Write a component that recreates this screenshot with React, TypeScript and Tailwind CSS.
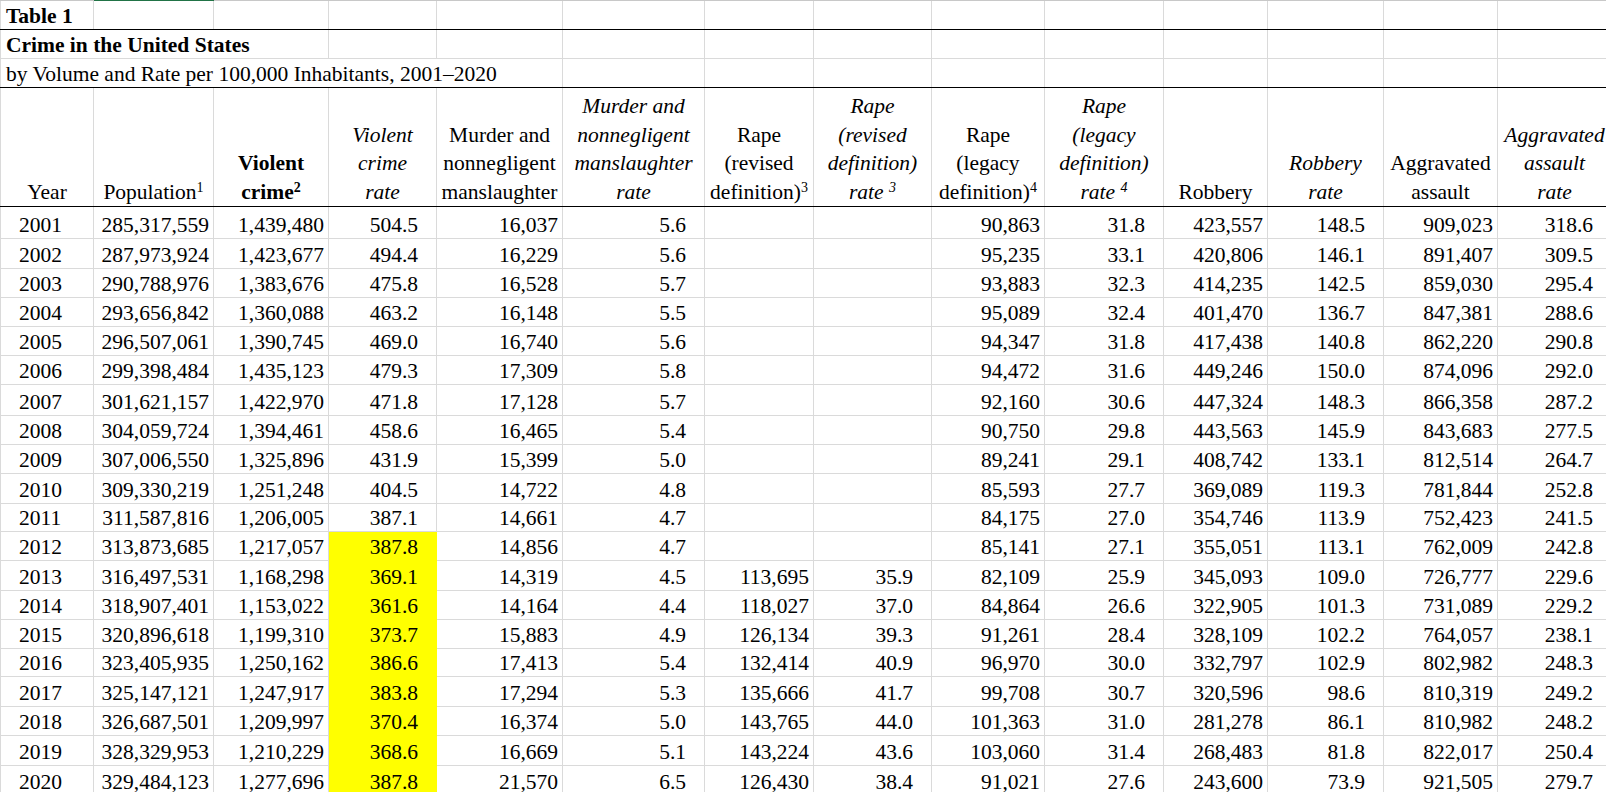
import React from "react";

const W = [
  "w-[94px] border-l",
  "w-[120px]",
  "w-[115px]",
  "w-[108px]",
  "w-[126px]",
  "w-[142px]",
  "w-[109px]",
  "w-[118px]",
  "w-[113px]",
  "w-[119px]",
  "w-[104px]",
  "w-[116px]",
  "w-[114px]",
  "w-[114px]",
];

const H = [
  "h-[32px]", "h-[30px]", "h-[29px]", "h-[29px]", "h-[29px]", "h-[29px]", "h-[31px]",
  "h-[29px]", "h-[29px]", "h-[30px]", "h-[28px]", "h-[29px]", "h-[30px]", "h-[29px]",
  "h-[29px]", "h-[28px]", "h-[30px]", "h-[29px]", "h-[30px]", "h-[30px]",
];

const Sup = ({ children }: { children: React.ReactNode }) => (
  <span className="relative -top-[7px] text-[14px] leading-none">{children}</span>
);

type Head = { lines: React.ReactNode[]; kind: "n" | "b" | "i" };

const HEAD: Head[] = [
  { lines: ["Year"], kind: "n" },
  { lines: [<>Population<Sup>1</Sup></>], kind: "n" },
  { lines: ["Violent", <>crime<Sup>2</Sup></>], kind: "b" },
  { lines: ["Violent", "crime", "rate"], kind: "i" },
  { lines: ["Murder and", "nonnegligent", "manslaughter"], kind: "n" },
  { lines: ["Murder and", "nonnegligent", "manslaughter", "rate"], kind: "i" },
  { lines: ["Rape", "(revised", <>definition)<Sup>3</Sup></>], kind: "n" },
  { lines: ["Rape", "(revised", "definition)", <>rate <Sup>3</Sup></>], kind: "i" },
  { lines: ["Rape", "(legacy", <>definition)<Sup>4</Sup></>], kind: "n" },
  { lines: ["Rape", "(legacy", "definition)", <>rate <Sup>4</Sup></>], kind: "i" },
  { lines: ["Robbery"], kind: "n" },
  { lines: ["Robbery", "rate"], kind: "i" },
  { lines: ["Aggravated", "assault"], kind: "n" },
  { lines: ["Aggravated", "assault", "rate"], kind: "i" },
];

const ROWS: string[][] = [
  ["2001","285,317,559","1,439,480","504.5","16,037","5.6","","","90,863","31.8","423,557","148.5","909,023","318.6"],
  ["2002","287,973,924","1,423,677","494.4","16,229","5.6","","","95,235","33.1","420,806","146.1","891,407","309.5"],
  ["2003","290,788,976","1,383,676","475.8","16,528","5.7","","","93,883","32.3","414,235","142.5","859,030","295.4"],
  ["2004","293,656,842","1,360,088","463.2","16,148","5.5","","","95,089","32.4","401,470","136.7","847,381","288.6"],
  ["2005","296,507,061","1,390,745","469.0","16,740","5.6","","","94,347","31.8","417,438","140.8","862,220","290.8"],
  ["2006","299,398,484","1,435,123","479.3","17,309","5.8","","","94,472","31.6","449,246","150.0","874,096","292.0"],
  ["2007","301,621,157","1,422,970","471.8","17,128","5.7","","","92,160","30.6","447,324","148.3","866,358","287.2"],
  ["2008","304,059,724","1,394,461","458.6","16,465","5.4","","","90,750","29.8","443,563","145.9","843,683","277.5"],
  ["2009","307,006,550","1,325,896","431.9","15,399","5.0","","","89,241","29.1","408,742","133.1","812,514","264.7"],
  ["2010","309,330,219","1,251,248","404.5","14,722","4.8","","","85,593","27.7","369,089","119.3","781,844","252.8"],
  ["2011","311,587,816","1,206,005","387.1","14,661","4.7","","","84,175","27.0","354,746","113.9","752,423","241.5"],
  ["2012","313,873,685","1,217,057","387.8","14,856","4.7","","","85,141","27.1","355,051","113.1","762,009","242.8"],
  ["2013","316,497,531","1,168,298","369.1","14,319","4.5","113,695","35.9","82,109","25.9","345,093","109.0","726,777","229.6"],
  ["2014","318,907,401","1,153,022","361.6","14,164","4.4","118,027","37.0","84,864","26.6","322,905","101.3","731,089","229.2"],
  ["2015","320,896,618","1,199,310","373.7","15,883","4.9","126,134","39.3","91,261","28.4","328,109","102.2","764,057","238.1"],
  ["2016","323,405,935","1,250,162","386.6","17,413","5.4","132,414","40.9","96,970","30.0","332,797","102.9","802,982","248.3"],
  ["2017","325,147,121","1,247,917","383.8","17,294","5.3","135,666","41.7","99,708","30.7","320,596","98.6","810,319","249.2"],
  ["2018","326,687,501","1,209,997","370.4","16,374","5.0","143,765","44.0","101,363","31.0","281,278","86.1","810,982","248.2"],
  ["2019","328,329,953","1,210,229","368.6","16,669","5.1","143,224","43.6","103,060","31.4","268,483","81.8","822,017","250.4"],
  ["2020","329,484,123","1,277,696","387.8","21,570","6.5","126,430","38.4","91,021","27.6","243,600","73.9","921,505","279.7"],
];

function TopRow({ text, bold, span, bottom }: { text: string; bold?: boolean; span: number; bottom: string }) {
  const spanW = ["", "w-[94px]", "w-[214px]", "w-[329px]", "w-[437px]", "w-[563px]"][span];
  return (
    <div className={`flex h-[29px] ${bottom}`}>
      <div
        className={`${spanW} shrink-0 border-l border-r border-[#dadada] flex items-end pl-[5px] pb-[2px] leading-[22px] whitespace-nowrap ${bold ? "font-bold" : ""}`}
      >
        {text}
      </div>
      {W.slice(span).map((w, i) => (
        <div key={i} className={`${w} shrink-0 border-r border-[#dadada]`} />
      ))}
    </div>
  );
}

export default function App() {
  return (
    <div className="w-[1606px] h-[792px] overflow-hidden bg-white text-black font-['Liberation_Serif','Times_New_Roman',serif] text-[21.5px]">
      <div className="w-[1612px]">
        {/* top strip */}
        <div className="flex h-[1px]">
          <div className="w-[94px] shrink-0 bg-[#c8c8c8]" />
          <div className="w-[120px] shrink-0 bg-[#217346]" />
          <div className="flex-1 bg-[#c8c8c8]" />
        </div>
        <TopRow text="Table 1" bold span={1} bottom="border-b border-black" />
        <TopRow text="Crime in the United States" bold span={3} bottom="border-b border-[#dadada]" />
        <TopRow text="by Volume and Rate per 100,000 Inhabitants, 2001–2020" span={5} bottom="border-b border-black" />

        {/* header */}
        <div className="flex h-[119px] border-b border-black">
          {HEAD.map((h, i) => (
            <div
              key={i}
              className={`${W[i]} shrink-0 border-r border-[#dadada] flex flex-col justify-end items-center text-center leading-[28.5px] ${
                h.kind === "b" ? "font-bold" : h.kind === "i" ? "italic" : ""
              }`}
            >
              {h.lines.map((l, j) => (
                <div key={j} className="whitespace-nowrap">
                  {l}
                </div>
              ))}
            </div>
          ))}
        </div>

        {/* body */}
        {ROWS.map((r, ri) => {
          const yellowRow = ri >= 11;
          return (
            <div key={ri} className={`flex ${H[ri]}`}>
              {r.map((v, ci) => {
                const yellow = yellowRow && ci === 3;
                const align =
                  ci === 0
                    ? "justify-start pl-[18px]"
                    : ci % 2 === 1 && ci !== 1
                    ? "justify-end pr-[18px]"
                    : ci === 1
                    ? "justify-end pr-[4px]"
                    : "justify-end pr-[4px]";
                const rateAlign =
                  ci === 3 || ci === 5 || ci === 7 || ci === 9 || ci === 11 || ci === 13
                    ? "justify-end pr-[18px]"
                    : align;
                return (
                  <div
                    key={ci}
                    className={`${W[ci]} shrink-0 border-r border-b flex items-end pb-[2px] leading-[22px] whitespace-nowrap ${rateAlign} ${
                      yellow ? "bg-[#ffff00] border-[#ffff00]" : "border-[#dadada]"
                    }`}
                  >
                    {v}
                  </div>
                );
              })}
            </div>
          );
        })}
      </div>
    </div>
  );
}
